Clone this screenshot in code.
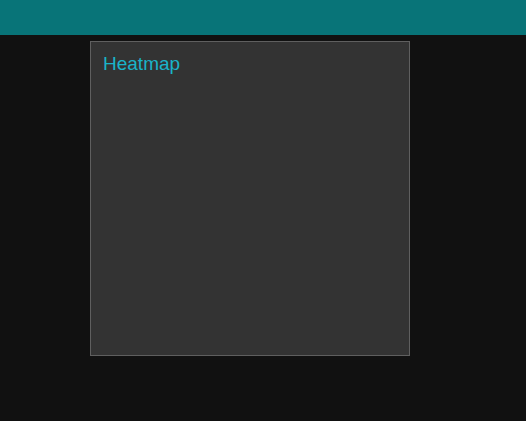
export default function App() {
  return (
    <div className="min-h-[421px] bg-[#111111] font-['Liberation_Sans',Arial,sans-serif]">
      <div className="h-[35px] bg-[#087478]" />
      <div className="ml-[90px] mt-[6px] w-[320px] h-[315px] border border-[#5f5f5f] bg-[#333333] px-[12px] pt-[10px]">
        <h2 className="text-[19px] leading-[24px] text-[#1ab4c9]">Heatmap</h2>
      </div>
    </div>
  );
}
